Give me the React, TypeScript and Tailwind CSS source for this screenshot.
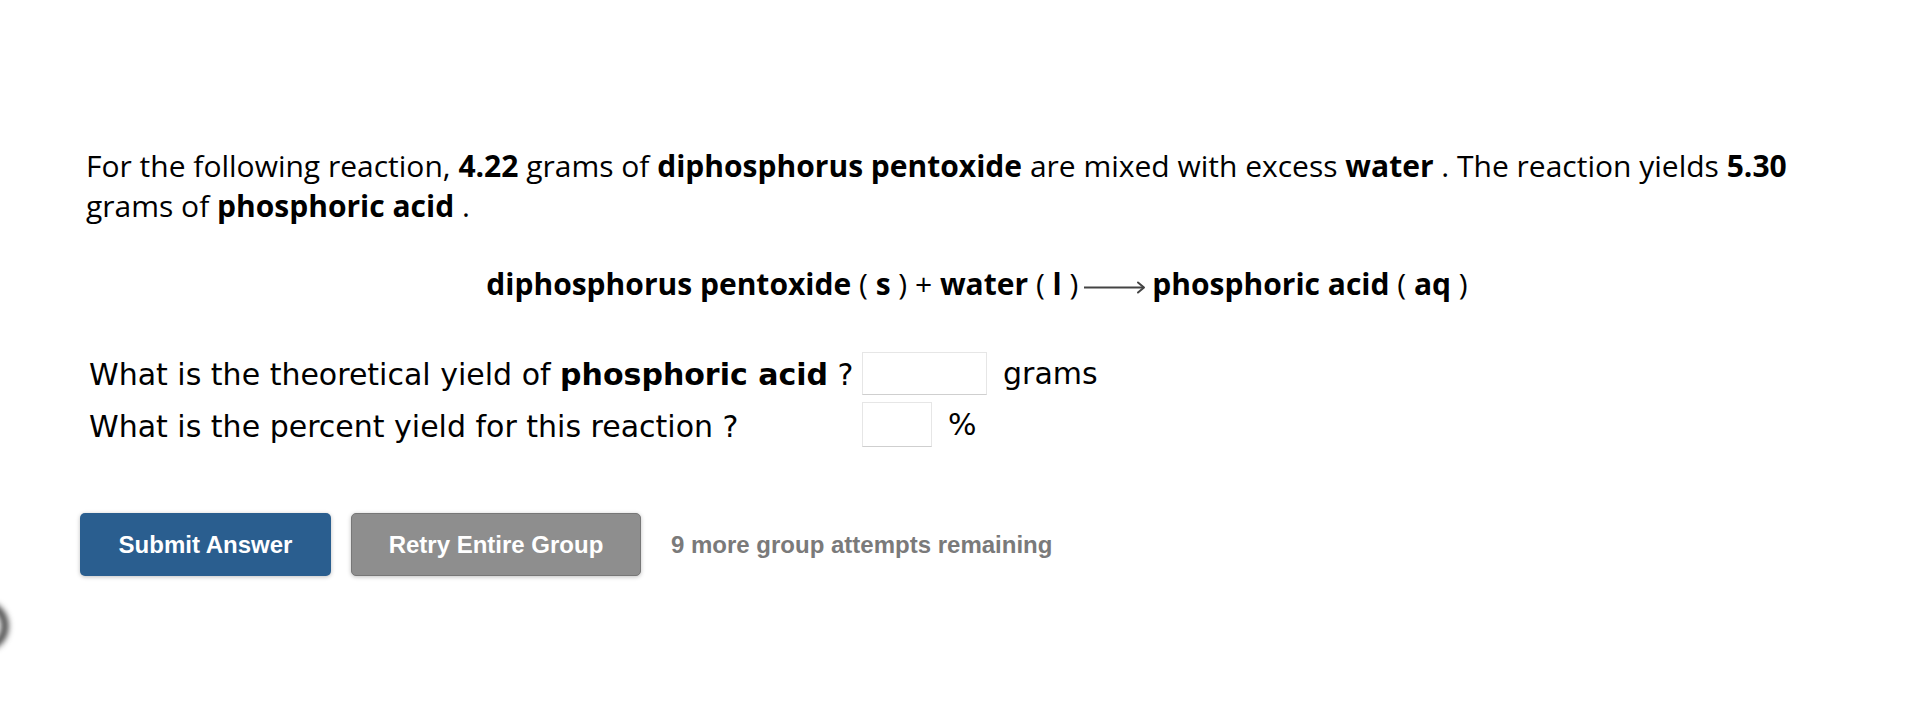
function Arrow() {
  return (
    <svg
      className="mx-[6px] inline-block align-middle"
      width="62"
      height="14"
      viewBox="0 0 62 14"
      fill="none"
      stroke="#444"
      strokeWidth="2"
    >
      <path d="M0 7.5H60" />
      <path d="M54 2.5L60 7.5L54 12.5" strokeLinecap="round" strokeLinejoin="round" />
    </svg>
  );
}

export default function App() {
  return (
    <div className="relative h-[713px] w-full overflow-hidden bg-white">
      <div
        className="absolute left-[-42px] top-[601px] h-[50px] w-[50px] rounded-full border-[6px] border-[#222] blur-[3px]"
        aria-hidden
      />
      <div className="pl-[86px] pr-[62px] pt-[146px]">
        <p className="text-[30px] leading-[40px] text-black [font-family:'Open_Sans',sans-serif]">
          For the following reaction, <b>4.22</b> grams of <b>diphosphorus pentoxide</b> are mixed with excess{" "}
          <b>water</b> . The reaction yields <b>5.30</b> grams of <b>phosphoric acid</b> .
        </p>
        <div className="mt-[38px] text-center text-[30px] leading-[40px] text-black [font-family:'Open_Sans',sans-serif]">
          <b>diphosphorus pentoxide</b> ( <b>s</b> ) + <b>water</b> ( <b>l</b> )
          <Arrow />
          <b>phosphoric acid</b> ( <b>aq</b> )
        </div>
        <div className="mt-[48px] text-[30px] leading-[36px] text-black [font-family:'DejaVu_Sans',Verdana,sans-serif]">
          <div className="flex h-[43px] items-center">
            <span className="w-[776px] shrink-0 pl-[3px] pt-[2px]">
              What is the theoretical yield of <b>phosphoric acid</b> ?
            </span>
            <span className="h-[43px] w-[125px] border border-[#e6e6e6] border-b-[#cfcfcf] bg-white" />
            <span className="ml-[16px]">grams</span>
          </div>
          <div className="mt-[7px] flex h-[45px] items-center">
            <span className="w-[776px] shrink-0 pl-[3px] pt-[4px]">What is the percent yield for this reaction ?</span>
            <span className="h-[45px] w-[70px] border border-[#e6e6e6] border-b-[#cfcfcf] bg-white" />
            <span className="ml-[16px]">%</span>
          </div>
        </div>
        <div className="mt-[66px] flex items-center [font-family:'Liberation_Sans',Arial,sans-serif]">
          <button className="ml-[-6px] h-[63px] w-[251px] rounded-[5px] bg-[#2a5e8f] text-[24px] font-bold text-white shadow-[0_1px_4px_rgba(0,0,0,0.25)]">
            Submit Answer
          </button>
          <button className="ml-[20px] h-[63px] w-[290px] rounded-[5px] border border-[#777] bg-[#8e8e8e] text-[24px] font-bold text-white shadow-[0_1px_4px_rgba(0,0,0,0.25)]">
            Retry Entire Group
          </button>
          <span className="ml-[30px] text-[24px] font-bold text-[#7a7a7a]">9 more group attempts remaining</span>
        </div>
      </div>
    </div>
  );
}
